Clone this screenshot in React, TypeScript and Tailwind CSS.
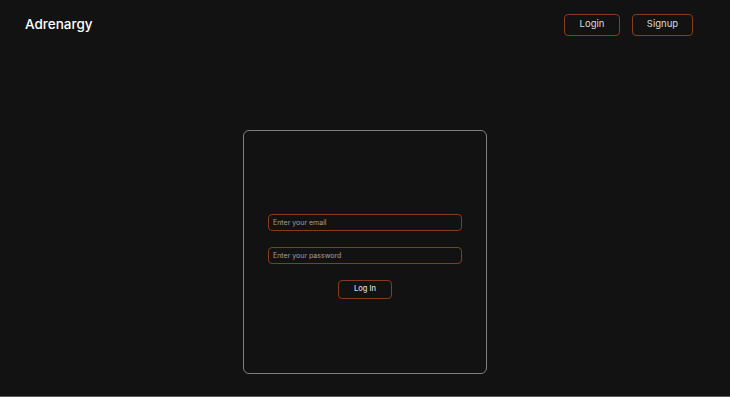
export default function App() {
  return (
    <div className="h-[397px] w-[730px] bg-[#121212] flex flex-col font-['Inter','Liberation_Sans',sans-serif] overflow-hidden">
      {/* Header */}
      <header className="h-[49px] shrink-0 flex items-center justify-between pl-[25px] pr-[37px]">
        <span className="text-white text-[13.5px] font-medium">Adrenargy</span>
        <nav className="flex items-center gap-[12px]">
          <button className="w-[56px] h-[22px] rounded-[4px] border border-[#863b1c] text-[#dcdcdc] text-[9.5px]">
            Login
          </button>
          <button className="w-[61px] h-[22px] rounded-[4px] border border-[#863b1c] text-[#dcdcdc] text-[9.5px]">
            Signup
          </button>
        </nav>
      </header>

      {/* Card */}
      <main className="flex-1 flex justify-center pt-[81px]">
        <div className="w-[244px] h-[244px] rounded-[6px] border border-[#808080] flex flex-col items-center justify-center gap-[16px] pt-[8px] px-[24px]">
          <input
            type="email"
            placeholder="Enter your email"
            className="w-[194px] h-[17px] rounded-[4px] border border-[#863b1c] bg-transparent px-[4px] text-[7px] text-white placeholder:text-[#a0a0a0] outline-none"
          />
          <input
            type="password"
            placeholder="Enter your password"
            className="w-[194px] h-[17px] rounded-[4px] border border-[#863b1c] bg-transparent px-[4px] text-[7px] text-white placeholder:text-[#a0a0a0] outline-none"
          />
          <button className="w-[54px] h-[19px] rounded-[4px] border border-[#863b1c] text-[#dcdcdc] text-[7.5px] font-medium">
            Log In
          </button>
        </div>
      </main>
      <div className="h-px shrink-0 bg-[#5a5a5a]" />
    </div>
  );
}
